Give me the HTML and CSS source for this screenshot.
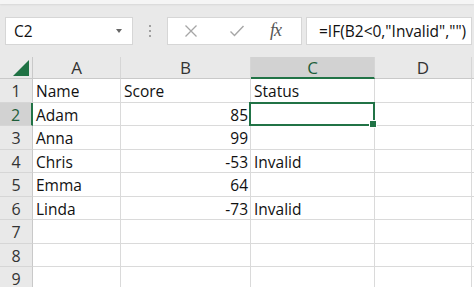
FILE: index.html
```html
<!DOCTYPE html>
<html lang="en">

<head>
  <meta charset="UTF-8">
  <meta name="viewport" content="width=device-width, initial-scale=1.0">
  <title>Book1 - Excel</title>
  <link rel="stylesheet" href="styles.css">
</head>

<body>
  <div class="ribbon-edge"></div>

  <div class="formula-bar">
    <div class="name-box">
      <span>C2</span>
      <span class="name-arrow"></span>
    </div>

    <div class="grip">
      <span></span>
      <span></span>
      <span></span>
    </div>

    <div class="fx-box">
      <svg class="icon" width="14" height="14" viewBox="0 0 14 14">
        <path d="M1.5 1.5 L12.5 12.5 M12.5 1.5 L1.5 12.5" stroke="#a6a6a6" stroke-width="1.3" fill="none" />
      </svg>
      <svg class="icon" width="16" height="14" viewBox="0 0 16 14">
        <path d="M1.5 7.5 L5.5 11.5 L14.5 2" stroke="#a6a6a6" stroke-width="1.4" fill="none" />
      </svg>
      <span class="fx">fx</span>
    </div>

    <div class="formula-input">=IF(B2&lt;0,"Invalid","")</div>
  </div>

  <div class="sheet">
    <div class="corner">
      <svg width="16" height="16" viewBox="0 0 16 16">
        <polygon points="16,0 16,16 0,16" fill="#1f7244" />
      </svg>
    </div>
    <div class="col-head">A</div>
    <div class="col-head">B</div>
    <div class="col-head active">C</div>
    <div class="col-head">D</div>
    <div class="col-head"></div>

    <div class="row-head">1</div>
    <div class="cell">Name</div>
    <div class="cell">Score</div>
    <div class="cell">Status</div>
    <div class="cell"></div>
    <div class="cell"></div>

    <div class="row-head active">2</div>
    <div class="cell">Adam</div>
    <div class="cell num">85</div>
    <div class="cell selected"></div>
    <div class="cell"></div>
    <div class="cell"></div>

    <div class="row-head">3</div>
    <div class="cell">Anna</div>
    <div class="cell num">99</div>
    <div class="cell"></div>
    <div class="cell"></div>
    <div class="cell"></div>

    <div class="row-head">4</div>
    <div class="cell">Chris</div>
    <div class="cell num">-53</div>
    <div class="cell">Invalid</div>
    <div class="cell"></div>
    <div class="cell"></div>

    <div class="row-head">5</div>
    <div class="cell">Emma</div>
    <div class="cell num">64</div>
    <div class="cell"></div>
    <div class="cell"></div>
    <div class="cell"></div>

    <div class="row-head">6</div>
    <div class="cell">Linda</div>
    <div class="cell num">-73</div>
    <div class="cell">Invalid</div>
    <div class="cell"></div>
    <div class="cell"></div>

    <div class="row-head">7</div>
    <div class="cell"></div>
    <div class="cell"></div>
    <div class="cell"></div>
    <div class="cell"></div>
    <div class="cell"></div>

    <div class="row-head">8</div>
    <div class="cell"></div>
    <div class="cell"></div>
    <div class="cell"></div>
    <div class="cell"></div>
    <div class="cell"></div>

    <div class="row-head">9</div>
    <div class="cell"></div>
    <div class="cell"></div>
    <div class="cell"></div>
    <div class="cell"></div>
    <div class="cell"></div>
  </div>
</body>

</html>
```

FILE: styles.css
```css
* {
  box-sizing: border-box;
}

body {
  margin: 0;
  overflow: hidden;
  background-color: #e9e9e9;
  font-family: "Open Sans", "Noto Sans", sans-serif;
  color: #111;
}

.ribbon-edge {
  height: 4px;
  background-color: #f5f5f5;
  box-shadow: 0 1px 2px rgba(0, 0, 0, 0.08);
}

.formula-bar {
  display: flex;
  align-items: center;
  height: 53px;
  padding: 0 2px 0 5px;
}

.name-box {
  display: flex;
  align-items: center;
  justify-content: space-between;
  width: 128px;
  height: 28px;
  padding: 0 10px 0 8px;
  background-color: #fff;
  border: 1px solid #d6d6d6;
  font-size: 15.5px;
}

.name-arrow {
  width: 0;
  height: 0;
  border-left: 3.5px solid transparent;
  border-right: 3.5px solid transparent;
  border-top: 4px solid #666;
}

.grip {
  display: flex;
  flex-direction: column;
  gap: 3px;
  width: 34px;
  align-items: center;
}

.grip span {
  width: 2px;
  height: 2px;
  background-color: #a0a0a0;
}

.fx-box {
  display: flex;
  align-items: center;
  width: 135px;
  height: 28px;
  padding-left: 16px;
  background-color: #fff;
  border: 1px solid #d6d6d6;
}

.fx-box .icon {
  margin-right: 31px;
}

.fx-box .icon + .icon {
  margin-right: 25px;
}

.fx {
  font-family: "Liberation Serif", serif;
  font-style: italic;
  font-size: 18px;
  color: #555;
  letter-spacing: -1px;
}

.formula-input {
  flex: 1;
  height: 28px;
  margin-left: 4px;
  padding-left: 12px;
  line-height: 26px;
  background-color: #fff;
  border: 1px solid #d6d6d6;
  font-size: 15.5px;
  white-space: nowrap;
  overflow: hidden;
}

.sheet {
  display: grid;
  grid-template-columns: 33px 88px 130px 124px 97px 1fr;
  grid-template-rows: 22px repeat(9, 23.5px);
  background-color: #fff;
  font-size: 15.5px;
}

.corner,
.col-head,
.row-head {
  background-color: #e9e9e9;
  color: #333;
  border-right: 1px solid #c9c9c9;
  border-bottom: 1px solid #c9c9c9;
}

.corner {
  display: flex;
  align-items: flex-end;
  justify-content: flex-end;
  padding: 0 3px 2px 0;
}

.col-head {
  text-align: center;
  font-size: 17px;
  line-height: 22px;
  border-right-color: #d6d6d6;
}

.col-head.active {
  background-color: #d2d2d2;
  border-bottom: 2px solid #217346;
  color: #1d5e3a;
}

.row-head {
  text-align: center;
  font-size: 16px;
  line-height: 23px;
  padding-top: 1px;
  border-bottom-color: #d6d6d6;
}

.row-head.active {
  background-color: #d2d2d2;
  border-right: 2px solid #217346;
  color: #1d5e3a;
}

.cell {
  padding: 1px 3px 0 3px;
  line-height: 23px;
  border-right: 1px solid #dadada;
  border-bottom: 1px solid #dadada;
  white-space: nowrap;
}

.cell.num {
  text-align: right;
  padding-right: 2px;
}

.cell.selected {
  position: relative;
}

.cell.selected::before {
  content: "";
  position: absolute;
  top: -1px;
  left: -2px;
  right: -1px;
  bottom: -1px;
  border: 2px solid #217346;
}

.cell.selected::after {
  content: "";
  position: absolute;
  right: -3px;
  bottom: -3px;
  width: 6px;
  height: 6px;
  background-color: #217346;
  border: 1px solid #fff;
}
```
